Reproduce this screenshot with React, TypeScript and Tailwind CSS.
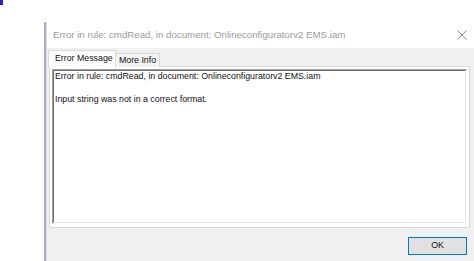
import React from 'react';

const font = { fontFamily: '"Liberation Sans", Arial, sans-serif' };

const CloseIcon: React.FC = () => (
    <svg width="10" height="10" viewBox="0 0 10 10" className="block">
        <path d="M0.5 0.5 L9.5 9.5 M9.5 0.5 L0.5 9.5" stroke="#8a8a8a" strokeWidth="1" fill="none" />
    </svg>
);

export default function App() {
    return (
        <div className="relative w-[474px] h-[261px] bg-white overflow-hidden" style={font}>
            {/* stray selection mark in the corner */}
            <div className="absolute left-0 top-0 w-[3px] h-[5px] bg-[#2424d6]" />

            {/* Dialog window */}
            <div className="absolute left-[44px] top-[22px] w-[430px] h-[239px] flex border-l-[2px] border-[#a9afc1]">
                <div className="flex-1 flex flex-col border-l border-[#dcdfe6]">
                    {/* Title bar */}
                    <div className="h-[26px] shrink-0 bg-white flex items-center justify-between pl-[6px] pr-[7px]">
                        <span className="text-[9.7px] leading-none text-[#9b9b9b] whitespace-nowrap">
                            Error in rule: cmdRead, in document: Onlineconfiguratorv2 EMS.iam
                        </span>
                        <CloseIcon />
                    </div>

                    {/* Body */}
                    <div className="flex-1 flex flex-col bg-[#f0f0f0]">
                        {/* Tabs */}
                        <div className="flex items-end pt-[2px] pl-[1px] h-[19px] relative z-10">
                            <div className="w-[68px] h-[17px] bg-white border border-b-0 border-[#d9d9d9] flex items-center pl-[6px] text-[8.8px] text-[#111]">
                                Error Message
                            </div>
                            <div className="w-[44px] h-[14px] bg-[#f3f3f3] border border-l-0 border-b-0 border-[#d9d9d9] flex items-center justify-center text-[8.8px] text-[#111]">
                                More Info
                            </div>
                        </div>

                        {/* Tab page */}
                        <div className="ml-[2px] mr-[4px] h-[162px] -mt-px bg-white border border-[#d9d9d9] p-[2px] pb-[3px]">
                            <div className="h-full border border-t-[#a0a0a0] border-l-[#a0a0a0] border-r-white border-b-white">
                                <div className="h-full border border-t-[#6e6e6e] border-l-[#6e6e6e] border-r-[#e8e8e8] border-b-[#e8e8e8] pl-[1px] text-[8.8px] leading-[11.5px] text-[#111]">
                                    <div>Error in rule: cmdRead, in document: Onlineconfiguratorv2 EMS.iam</div>
                                    <div className="h-[11.5px]" />
                                    <div>Input string was not in a correct format.</div>
                                </div>
                            </div>
                        </div>

                        {/* Buttons */}
                        <div className="flex-1 flex justify-end items-start pt-[9px] pr-[7px]">
                            <div className="w-[59px] h-[18px] border border-[#0078d7] bg-[#e1e1e1] flex items-center justify-center text-[8.8px] text-[#111]">
                                OK
                            </div>
                        </div>
                    </div>
                </div>
            </div>
        </div>
    );
}
